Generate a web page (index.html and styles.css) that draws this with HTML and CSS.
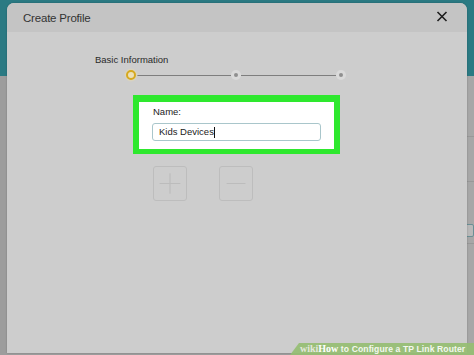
FILE: index.html
```html
<!DOCTYPE html>
<html>
<head>
<meta charset="utf-8">
<title>Create Profile</title>
<link rel="stylesheet" href="styles.css">
</head>
<body>
  <div class="page">
    <div class="topbar"></div>
    <div class="main">
      <div class="sidebar"></div>
      <div class="rows">
        <div class="row row-a"></div>
        <div class="row row-b"></div>
        <div class="row row-c">
          <span class="row-text">r</span>
          <span class="row-box"></span>
        </div>
      </div>
    </div>
  </div>

  <div class="modal">
    <div class="modal-header">
      <span class="modal-title">Create Profile</span>
      <svg class="close" width="12" height="11" viewBox="0 0 12 11">
        <path d="M1.5 1 L10.5 10 M10.5 1 L1.5 10" stroke="#1e1e1e" stroke-width="1.6" fill="none"/>
      </svg>
    </div>
    <div class="modal-body">
      <div class="stepper">
        <div class="step-label">Basic Information</div>
        <div class="track">
          <span class="dot dot-active"></span>
          <span class="line"></span>
          <span class="dot"></span>
          <span class="line"></span>
          <span class="dot"></span>
        </div>
      </div>
      <div class="highlight">
        <div class="field-label">Name:</div>
        <div class="input">Kids Devices<span class="caret"></span></div>
      </div>
      <div class="buttons">
        <div class="sq-btn">
          <svg width="34" height="35" viewBox="0 0 34 35">
            <path d="M6 17.5 H28 M17 6.5 V28.5" stroke="#bcbcbc" stroke-width="1.2" fill="none"/>
          </svg>
        </div>
        <div class="sq-btn">
          <svg width="34" height="35" viewBox="0 0 34 35">
            <path d="M7 17.5 H27" stroke="#bcbcbc" stroke-width="1.2" fill="none"/>
          </svg>
        </div>
      </div>
    </div>
  </div>

  <div class="watermark">
    <span class="wm-wiki">wiki</span><span class="wm-how">How</span><span class="wm-rest"> to Configure a TP Link Router</span>
  </div>
</body>
</html>
```

FILE: styles.css
```css
html, body {
  margin: 0;
  padding: 0;
}
body {
  width: 474px;
  height: 355px;
  overflow: hidden;
  background: #9d9d9d;
  font-family: "Liberation Sans", Arial, sans-serif;
  position: relative;
}

.page {
  display: flex;
  flex-direction: column;
  height: 355px;
}
.topbar {
  height: 76px;
  background: #2b7a83;
  flex-shrink: 0;
}
.main {
  display: flex;
  flex: 1;
}
.sidebar {
  width: 440px;
  background: #9d9d9d;
}
.rows {
  flex: 1;
  display: flex;
  flex-direction: column;
  background: #a7a7a7;
}
.row {
  border-bottom: 1px solid #989898;
}
.row-a { height: 60px; }
.row-b { height: 44px; }
.row-c {
  height: 62px;
  display: flex;
  flex-direction: column;
  padding-left: 30px;
  box-sizing: border-box;
  padding-top: 1px;
}
.row-text {
  font-size: 10px;
  color: #222;
  line-height: 12px;
  white-space: nowrap;
}
.row-box {
  margin-top: 29px;
  width: 10px;
  height: 11px;
  border: 1px solid #6a8f95;
  border-radius: 2px;
  background: #b9b9b9;
}

.modal {
  position: absolute;
  left: 7px;
  top: 3px;
  width: 460px;
  height: 350px;
  background: #cdcdcd;
  border-radius: 7px 7px 0 0;
  box-shadow: 0 0 2px rgba(0,0,0,0.25);
  display: flex;
  flex-direction: column;
  overflow: hidden;
}
.modal-header {
  height: 29px;
  background: #c4c4c4;
  display: flex;
  align-items: center;
  justify-content: space-between;
  padding: 0 19px 0 16px;
  flex-shrink: 0;
}
.modal-title {
  font-size: 11.5px;
  color: #333;
  letter-spacing: -0.2px;
}
.close {
  display: block;
  margin-top: -2px;
}

.modal-body {
  display: flex;
  flex-direction: column;
  padding: 22px 0 0 88px;
}
.step-label {
  font-size: 9.5px;
  line-height: 12px;
  color: #2a2a2a;
}
.track {
  display: flex;
  align-items: center;
  margin-left: 31px;
  margin-top: 4px;
  height: 10px;
}
.dot {
  width: 10px;
  height: 10px;
  border-radius: 50%;
  background: #dadada;
  position: relative;
  flex-shrink: 0;
}
.dot::after {
  content: "";
  position: absolute;
  left: 3px;
  top: 3px;
  width: 4px;
  height: 4px;
  border-radius: 50%;
  background: #8f8f8f;
}
.dot-active {
  background: #ece0b8;
  border: 2.5px solid #d6a91f;
  box-sizing: border-box;
  box-shadow: 0 0 0 1.5px #d9d3bf;
}
.dot-active::after {
  display: none;
}
.line {
  height: 1px;
  background: #7e7e7e;
  width: 95px;
}

.highlight {
  margin-top: 15px;
  margin-left: 38px;
  width: 207px;
  box-sizing: border-box;
  border: 6px solid #2ee82e;
  border-top-width: 7px;
  border-bottom-width: 5px;
  background: #ffffff;
  padding: 4px 0 8px 13px;
  display: flex;
  flex-direction: column;
}
.field-label {
  font-size: 9.5px;
  line-height: 12px;
  color: #222;
  padding-left: 1px;
}
.input {
  margin-top: 5px;
  width: 169px;
  height: 18px;
  box-sizing: border-box;
  border: 1px solid #a9c6cb;
  border-radius: 3px;
  font-size: 9.5px;
  line-height: 16px;
  color: #222;
  padding-left: 6px;
  display: flex;
  align-items: center;
}
.caret {
  width: 1px;
  height: 11px;
  background: #111;
}

.buttons {
  display: flex;
  gap: 32px;
  margin-top: 12px;
  margin-left: 58px;
}
.sq-btn {
  width: 34px;
  height: 35px;
  box-sizing: border-box;
  border: 1px solid #bdbdbd;
  border-radius: 3px;
  display: flex;
  align-items: center;
  justify-content: center;
}
.sq-btn svg {
  display: block;
}

.watermark {
  position: absolute;
  right: 0;
  bottom: 0;
  width: 174px;
  height: 12px;
  padding-left: 10px;
  background: rgba(150, 190, 115, 0.92);
  clip-path: polygon(9px 0, 100% 0, 100% 100%, 0 100%);
  font-size: 9px;
  line-height: 12px;
  color: #f4f8ef;
  white-space: nowrap;
  font-weight: bold;
  overflow: hidden;
}
.wm-wiki {
  font-family: "Liberation Serif", serif;
  font-size: 10px;
  color: #e4e8dc;
}
.wm-how {
  font-family: "Liberation Serif", serif;
  font-size: 10px;
  color: #ffffff;
}
.wm-rest {
  font-size: 8.6px;
  letter-spacing: 0.1px;
}
```
